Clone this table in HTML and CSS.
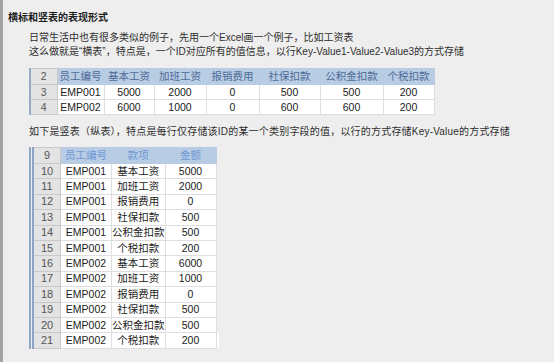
FILE: index.html
```html
<!DOCTYPE html>
<html lang="zh-CN">
<head>
	<meta charset="UTF-8">
	<title>横标和竖表的表现形式</title>
	<link rel="stylesheet" href="styles.css">
</head>
<body>
	<div class="page">
		<h3 class="title">横标和竖表的表现形式</h3>
		<div class="content">
			<p>日常生活中也有很多类似的例子，先用一个Excel画一个例子，比如工资表</p>
			<p>这么做就是“横表”，特点是，一个ID对应所有的值信息，以行Key-Value1-Value2-Value3的方式存储</p>

			<table class="sheet wide">
				<colgroup>
					<col style="width:27px"><col style="width:47px"><col style="width:50px"><col style="width:52px">
					<col style="width:53px"><col style="width:61px"><col style="width:63px"><col style="width:51px">
				</colgroup>
				<tr class="head">
					<td class="num">2</td><td>员工编号</td><td>基本工资</td><td>加班工资</td><td>报销费用</td><td>社保扣款</td><td>公积金扣款</td><td>个税扣款</td>
				</tr>
				<tr>
					<td class="num">3</td><td>EMP001</td><td>5000</td><td>2000</td><td>0</td><td>500</td><td>500</td><td>200</td>
				</tr>
				<tr>
					<td class="num">4</td><td>EMP002</td><td>6000</td><td>1000</td><td>0</td><td>600</td><td>600</td><td>200</td>
				</tr>
			</table>

			<p class="gap">如下是竖表（纵表），特点是每行仅存储该ID的某一个类别字段的值，以行的方式存储Key-Value的方式存储</p>

			<table class="sheet tall">
				<colgroup>
					<col style="width:29px"><col style="width:51px"><col style="width:51px"><col style="width:51px"><col style="width:2px">
				</colgroup>
				<tr class="head">
					<td class="num">9</td><td>员工编号</td><td>款项</td><td>金额</td><td class="cut"></td>
				</tr>
				<tr><td class="num">10</td><td>EMP001</td><td>基本工资</td><td>5000</td><td class="cut"></td></tr>
				<tr><td class="num">11</td><td>EMP001</td><td>加班工资</td><td>2000</td><td class="cut"></td></tr>
				<tr><td class="num">12</td><td>EMP001</td><td>报销费用</td><td>0</td><td class="cut"></td></tr>
				<tr><td class="num">13</td><td>EMP001</td><td>社保扣款</td><td>500</td><td class="cut"></td></tr>
				<tr><td class="num">14</td><td>EMP001</td><td>公积金扣款</td><td>500</td><td class="cut"></td></tr>
				<tr><td class="num">15</td><td>EMP001</td><td>个税扣款</td><td>200</td><td class="cut"></td></tr>
				<tr><td class="num">16</td><td>EMP002</td><td>基本工资</td><td>6000</td><td class="cut"></td></tr>
				<tr><td class="num">17</td><td>EMP002</td><td>加班工资</td><td>1000</td><td class="cut"></td></tr>
				<tr><td class="num">18</td><td>EMP002</td><td>报销费用</td><td>0</td><td class="cut"></td></tr>
				<tr><td class="num">19</td><td>EMP002</td><td>社保扣款</td><td>500</td><td class="cut"></td></tr>
				<tr><td class="num">20</td><td>EMP002</td><td>公积金扣款</td><td>500</td><td class="cut"></td></tr>
				<tr><td class="num">21</td><td>EMP002</td><td>个税扣款</td><td>200</td><td class="cut"></td></tr>
			</table>
		</div>
	</div>
</body>
</html>
```

FILE: styles.css
```css
*{
	margin:0;
	padding:0;
}
body{
	background:#eeeeee;
	font-family:"Liberation Sans","Noto Sans CJK SC",sans-serif;
	color:#2b2b2b;
}
.page{
	border-left:3px solid #a2a2a2;
	min-height:362px;
	box-sizing:border-box;
	padding:11px 0 0 5px;
}
.title{
	font-size:10px;
	font-weight:bold;
	line-height:14px;
	color:#1e1e1e;
}
.content{
	padding:6px 0 0 21px;
}
.content p{
	font-size:10px;
	line-height:14px;
	color:#2e2e2e;
}
.content p.gap{
	margin-top:10px;
	letter-spacing:0.2px;
}
.sheet{
	border-collapse:collapse;
	table-layout:fixed;
	font-size:10.5px;
	line-height:13px;
	margin-top:9px;
}
.sheet td{
	height:14px;
	padding:0;
	text-align:center;
	white-space:nowrap;
	overflow:hidden;
	background:#fff;
	color:#1c1c1c;
	border:1px solid #dedede;
}
.sheet tr.head td{
	background:#b8cce4;
	color:#4d6b96;
	border-color:#b8cce4;
	height:15px;
}
.sheet td.num,
.sheet tr.head td.num{
	background:#e3e3e3;
	color:#555;
	border-color:#c9c9c9;
	border-left:2px solid #98abc6;
}
.tall{
	margin-top:8px;
}
.tall td{
	height:14.4px;
}
.tall tr.head td{
	color:#6d98d3;
}
.tall td.num,
.tall tr.head td.num{
	border-left:5px double #8ea6c6;
	font-size:11px;
}
.tall td.cut,
.tall tr.head td.cut{
	background:#fff;
	border:0;
}
```
